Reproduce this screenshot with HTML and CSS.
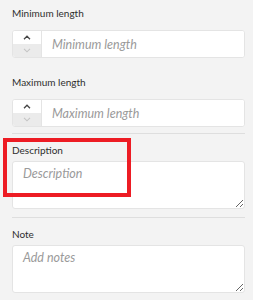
FILE: index.html
```html
<!DOCTYPE html>
<html lang="en">
<head>
    <meta charset="UTF-8">
    <meta name="viewport" content="width=device-width, initial-scale=1.0">
    <title>Field settings</title>
    <link rel="stylesheet" href="styles.css">
</head>
<body>
    <div class="panel">
        <div class="field first">
            <label class="field-label">Minimum length</label>
            <div class="number-input">
                <div class="spinner">
                    <span class="spin up">
                        <svg width="8" height="5" viewBox="0 0 8 5"><path d="M1 4.2 L4 1.2 L7 4.2" fill="none" stroke="#444" stroke-width="1.3"/></svg>
                    </span>
                    <span class="spin down">
                        <svg width="8" height="5" viewBox="0 0 8 5"><path d="M1 0.8 L4 3.8 L7 0.8" fill="none" stroke="#c4c4c4" stroke-width="1.1"/></svg>
                    </span>
                </div>
                <input type="text" placeholder="Minimum length">
            </div>
        </div>

        <div class="field">
            <label class="field-label">Maximum length</label>
            <div class="number-input">
                <div class="spinner">
                    <span class="spin up">
                        <svg width="8" height="5" viewBox="0 0 8 5"><path d="M1 4.2 L4 1.2 L7 4.2" fill="none" stroke="#444" stroke-width="1.3"/></svg>
                    </span>
                    <span class="spin down">
                        <svg width="8" height="5" viewBox="0 0 8 5"><path d="M1 0.8 L4 3.8 L7 0.8" fill="none" stroke="#c4c4c4" stroke-width="1.1"/></svg>
                    </span>
                </div>
                <input type="text" placeholder="Maximum length">
            </div>
        </div>

        <hr class="divider">

        <div class="field area">
            <label class="field-label">Description</label>
            <textarea placeholder="Description"></textarea>
        </div>

        <hr class="divider">

        <div class="field area">
            <label class="field-label">Note</label>
            <textarea placeholder="Add notes"></textarea>
        </div>
    </div>

    <!-- highlight box drawn over the description field -->
    <div class="highlight"></div>
</body>
</html>
```

FILE: styles.css
```css
body {
    margin: 0;
    background-color: #f3f3f3;
    font-family: Lato, "Open Sans", sans-serif;
    color: #333;
    position: relative;
    height: 300px;
    overflow: hidden;
}
.panel {
    padding: 0 8px 0 12px;
}
.field {
    margin-top: 18px;
}
.field.first {
    margin-top: 7px;
}
.field-label {
    display: block;
    font-size: 10px;
    line-height: 12px;
    color: #2e2e2e;
    margin-bottom: 11px;
}
.field.area {
    margin-top: 10px;
}
.field.area .field-label {
    margin-bottom: 5px;
}
.number-input {
    display: flex;
    height: 28px;
    box-sizing: border-box;
    background-color: white;
    border: 1px solid #e4e4e4;
    border-radius: 3px;
    overflow: hidden;
}
.spinner {
    width: 28px;
    display: flex;
    flex-direction: column;
    border-right: 1px solid #e4e4e4;
}
.spin {
    flex: 1;
    display: flex;
    align-items: center;
    justify-content: center;
}
.spin.up {
    background-color: white;
}
.spin.down {
    background-color: #ebebeb;
}
input[type="text"],
textarea {
    font-family: Lato, "Open Sans", sans-serif;
    font-size: 12.5px;
    color: #333;
    background-color: white;
    outline: none;
}
input[type="text"] {
    flex: 1;
    min-width: 0;
    border: none;
    padding: 0 10px;
}
textarea {
    display: block;
    width: 100%;
    height: 48px;
    box-sizing: border-box;
    border: 1px solid #e4e4e4;
    border-radius: 3px;
    padding: 4px 10px;
    resize: vertical;
}
::placeholder {
    color: #9a9a9a;
    font-style: italic;
}
.divider {
    border: none;
    border-top: 1px solid #dedede;
    margin: 6px 0 0;
}
.field.area + .divider {
    margin-top: 8px;
}
.highlight {
    position: absolute;
    left: 3px;
    top: 138px;
    width: 128px;
    height: 59px;
    box-sizing: border-box;
    border: 4px solid #ed1c24;
}
```
